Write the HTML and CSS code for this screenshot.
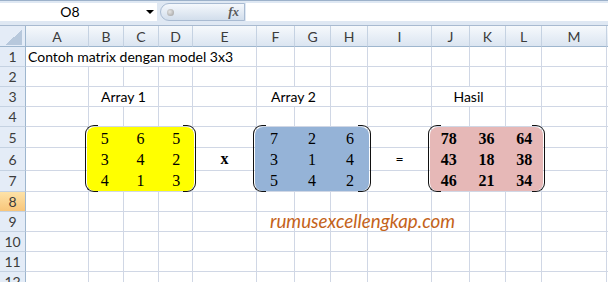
FILE: index.html
```html
<!DOCTYPE html>
<html>

<head>
    <title>Contoh matrix dengan model 3x3</title>
    <link rel="stylesheet" href="styles.css">
</head>

<body>
    <div class="formula-bar">
        <div class="name-box">O8<span class="drop"></span></div>
        <div class="fx-box"><span class="dot"></span><span class="fx">fx</span></div>
        <div class="formula-input"></div>
    </div>

    <table class="sheet">
        <colgroup>
            <col class="w-head">
            <col class="w-a"><col class="w-b"><col class="w-c"><col class="w-d"><col class="w-e">
            <col class="w-f"><col class="w-g"><col class="w-h"><col class="w-i"><col class="w-j">
            <col class="w-k"><col class="w-l"><col class="w-m"><col class="w-n">
        </colgroup>
        <tr class="heads">
            <th class="corner"></th>
            <th>A</th><th>B</th><th>C</th><th>D</th><th>E</th><th>F</th><th>G</th>
            <th>H</th><th>I</th><th>J</th><th>K</th><th>L</th><th>M</th><th></th>
        </tr>
        <tr>
            <th class="row-head">1</th>
            <td colspan="5">Contoh matrix dengan model 3x3</td>
            <td></td><td></td><td></td><td></td><td></td><td></td><td></td><td></td><td></td>
        </tr>
        <tr>
            <th class="row-head">2</th>
            <td></td><td></td><td></td><td></td><td></td><td></td><td></td>
            <td></td><td></td><td></td><td></td><td></td><td></td><td></td>
        </tr>
        <tr>
            <th class="row-head">3</th>
            <td></td>
            <td colspan="2" class="label">Array 1</td>
            <td></td><td></td>
            <td colspan="2" class="label">Array 2</td>
            <td></td><td></td>
            <td colspan="2" class="label">Hasil</td>
            <td></td><td></td><td></td>
        </tr>
        <tr>
            <th class="row-head">4</th>
            <td></td><td></td><td></td><td></td><td></td><td></td><td></td>
            <td></td><td></td><td></td><td></td><td></td><td></td><td></td>
        </tr>
        <tr class="r21">
            <th class="row-head">5</th>
            <td></td>
            <td colspan="3" rowspan="3" class="matrix">
                <div class="box yellow">
                    <span>5</span><span>6</span><span>5</span>
                    <span>3</span><span>4</span><span>2</span>
                    <span>4</span><span>1</span><span>3</span>
                </div>
            </td>
            <td></td>
            <td colspan="3" rowspan="3" class="matrix">
                <div class="box blue">
                    <span>7</span><span>2</span><span>6</span>
                    <span>3</span><span>1</span><span>4</span>
                    <span>5</span><span>4</span><span>2</span>
                </div>
            </td>
            <td></td>
            <td colspan="3" rowspan="3" class="matrix">
                <div class="box pink result">
                    <span>78</span><span>36</span><span>64</span>
                    <span>43</span><span>18</span><span>38</span>
                    <span>46</span><span>21</span><span>34</span>
                </div>
            </td>
            <td></td><td></td>
        </tr>
        <tr class="r22">
            <th class="row-head">6</th>
            <td></td>
            <td class="op times">x</td>
            <td class="op">=</td>
            <td></td><td></td>
        </tr>
        <tr class="r21">
            <th class="row-head">7</th>
            <td></td><td></td><td></td><td></td><td></td>
        </tr>
        <tr>
            <th class="row-head sel">8</th>
            <td></td><td></td><td></td><td></td><td></td><td></td><td></td>
            <td></td><td></td><td></td><td></td><td></td><td></td><td></td>
        </tr>
        <tr>
            <th class="row-head">9</th>
            <td></td><td></td><td></td><td></td><td></td>
            <td class="brand">rumusexcellengkap.com</td>
            <td></td><td></td><td></td><td></td><td></td><td></td><td></td><td></td>
        </tr>
        <tr>
            <th class="row-head">10</th>
            <td></td><td></td><td></td><td></td><td></td><td></td><td></td>
            <td></td><td></td><td></td><td></td><td></td><td></td><td></td>
        </tr>
        <tr>
            <th class="row-head">11</th>
            <td></td><td></td><td></td><td></td><td></td><td></td><td></td>
            <td></td><td></td><td></td><td></td><td></td><td></td><td></td>
        </tr>
        <tr>
            <th class="row-head">12</th>
            <td></td><td></td><td></td><td></td><td></td><td></td><td></td>
            <td></td><td></td><td></td><td></td><td></td><td></td><td></td>
        </tr>
    </table>
</body>

</html>
```

FILE: styles.css
```css
body {
    margin: 0;
    overflow: hidden;
    background-color: #fff;
    font-family: Lato, "Liberation Sans", sans-serif;
}

/* formula bar */

.formula-bar {
    display: flex;
    height: 26px;
    box-sizing: border-box;
    padding: 2px 0 4px 0;
    background-color: #dfe8f3;
    border-top: 1px solid #9cb1ca;
    border-bottom: 1px solid #a8bad0;
}

.name-box {
    position: relative;
    width: 157px;
    padding-right: 17px;
    box-sizing: border-box;
    background-color: #fff;
    text-align: center;
    font-size: 14px;
    line-height: 18px;
    color: #000;
}

.drop {
    position: absolute;
    right: 3px;
    top: 7px;
    border-left: 4px solid transparent;
    border-right: 4px solid transparent;
    border-top: 4px solid #000;
}

.fx-box {
    display: flex;
    align-items: center;
    justify-content: space-between;
    width: 85px;
    margin-left: 3px;
    padding: 0 5px 0 6px;
    box-sizing: border-box;
    background: linear-gradient(#f5f8fc, #d2deec);
    border: 1px solid #a9bbd2;
    border-radius: 10px 0 0 10px;
}

.dot {
    width: 7px;
    height: 7px;
    border-radius: 50%;
    background: radial-gradient(circle at 40% 40%, #e6e6e6, #9a9a9a);
}

.fx {
    font-family: "Liberation Serif", serif;
    font-style: italic;
    font-weight: bold;
    font-size: 13px;
    color: #5a5a5a;
}

.formula-input {
    flex: 1;
    margin-left: 1px;
    background-color: #fff;
}

/* sheet */

.sheet {
    table-layout: fixed;
    border-collapse: separate;
    border-spacing: 0;
    width: 627px;
    font-size: 14px;
    color: #000;
}

.w-head { width: 26px; }
.w-a { width: 63px; }
.w-b { width: 35px; }
.w-c { width: 35px; }
.w-d { width: 34px; }
.w-e { width: 64px; }
.w-f { width: 38px; }
.w-g { width: 36px; }
.w-h { width: 37px; }
.w-i { width: 64px; }
.w-j { width: 38px; }
.w-k { width: 36px; }
.w-l { width: 36px; }
.w-m { width: 65px; }
.w-n { width: 20px; }

.sheet tr {
    height: 20px;
}

.sheet tr.heads {
    height: 21px;
}

.sheet tr.r21 {
    height: 21px;
}

.sheet tr.r22 {
    height: 22px;
}

.sheet td {
    padding: 0 2px 1px 2px;
    border-right: 1px solid #d0d7e5;
    border-bottom: 1px solid #d0d7e5;
    white-space: nowrap;
    overflow: visible;
    line-height: 16px;
    vertical-align: bottom;
}

.sheet th {
    padding: 0;
    font-weight: normal;
    font-size: 14px;
    color: #3c3c3c;
    white-space: nowrap;
}

.heads th {
    background: linear-gradient(#f6f9fc, #dbe5f1);
    border-right: 1px solid #c5d2e2;
    border-bottom: 1px solid #9eb6ce;
}

.heads th.corner {
    background: linear-gradient(to bottom right, transparent 50%, #b7c8dc 50%) 5px 4px / 17px 15px no-repeat, #e4ecf7;
    border-right: 1px solid #9eb6ce;
}

.row-head {
    background-color: #e4ecf7;
    border-right: 1px solid #9eb6ce;
    border-bottom: 1px solid #c5d2e2;
    text-align: center;
}

.row-head.sel {
    background: linear-gradient(#fde2a8, #f8c67a);
}

.sheet .label {
    text-align: center;
}

.sheet .op {
    padding: 0;
    text-align: center;
    vertical-align: middle;
}

.sheet .times {
    font-family: "Liberation Serif", serif;
    font-weight: bold;
    font-size: 16px;
}

.sheet .brand {
    padding-left: 13px;
    color: #c4631b;
    font-style: italic;
    font-size: 18.8px;
    vertical-align: middle;
}

/* matrices */

.sheet .matrix {
    padding: 0;
    vertical-align: top;
}

.box {
    position: relative;
    display: grid;
    grid-template-columns: repeat(3, 1fr);
    grid-template-rows: 21px 22px 20px;
    align-items: center;
    justify-items: center;
    margin: 0 -2px;
    padding-top: 1px;
    border-radius: 8px;
    font-family: "Liberation Serif", serif;
    font-size: 16px;
    color: #000;
}

.box::before,
.box::after {
    content: "";
    position: absolute;
    top: -2px;
    bottom: -1px;
    width: 12px;
    border: 1.5px solid #111;
}

.box::before {
    left: -2px;
    border-right: none;
    border-radius: 9px 0 0 9px;
}

.box::after {
    right: -2px;
    border-left: none;
    border-radius: 0 9px 9px 0;
}

.yellow {
    background-color: #ffff00;
}

.blue {
    background-color: #95b3d7;
}

.pink {
    background-color: #e6b8b7;
}

.result {
    font-weight: bold;
}
```
